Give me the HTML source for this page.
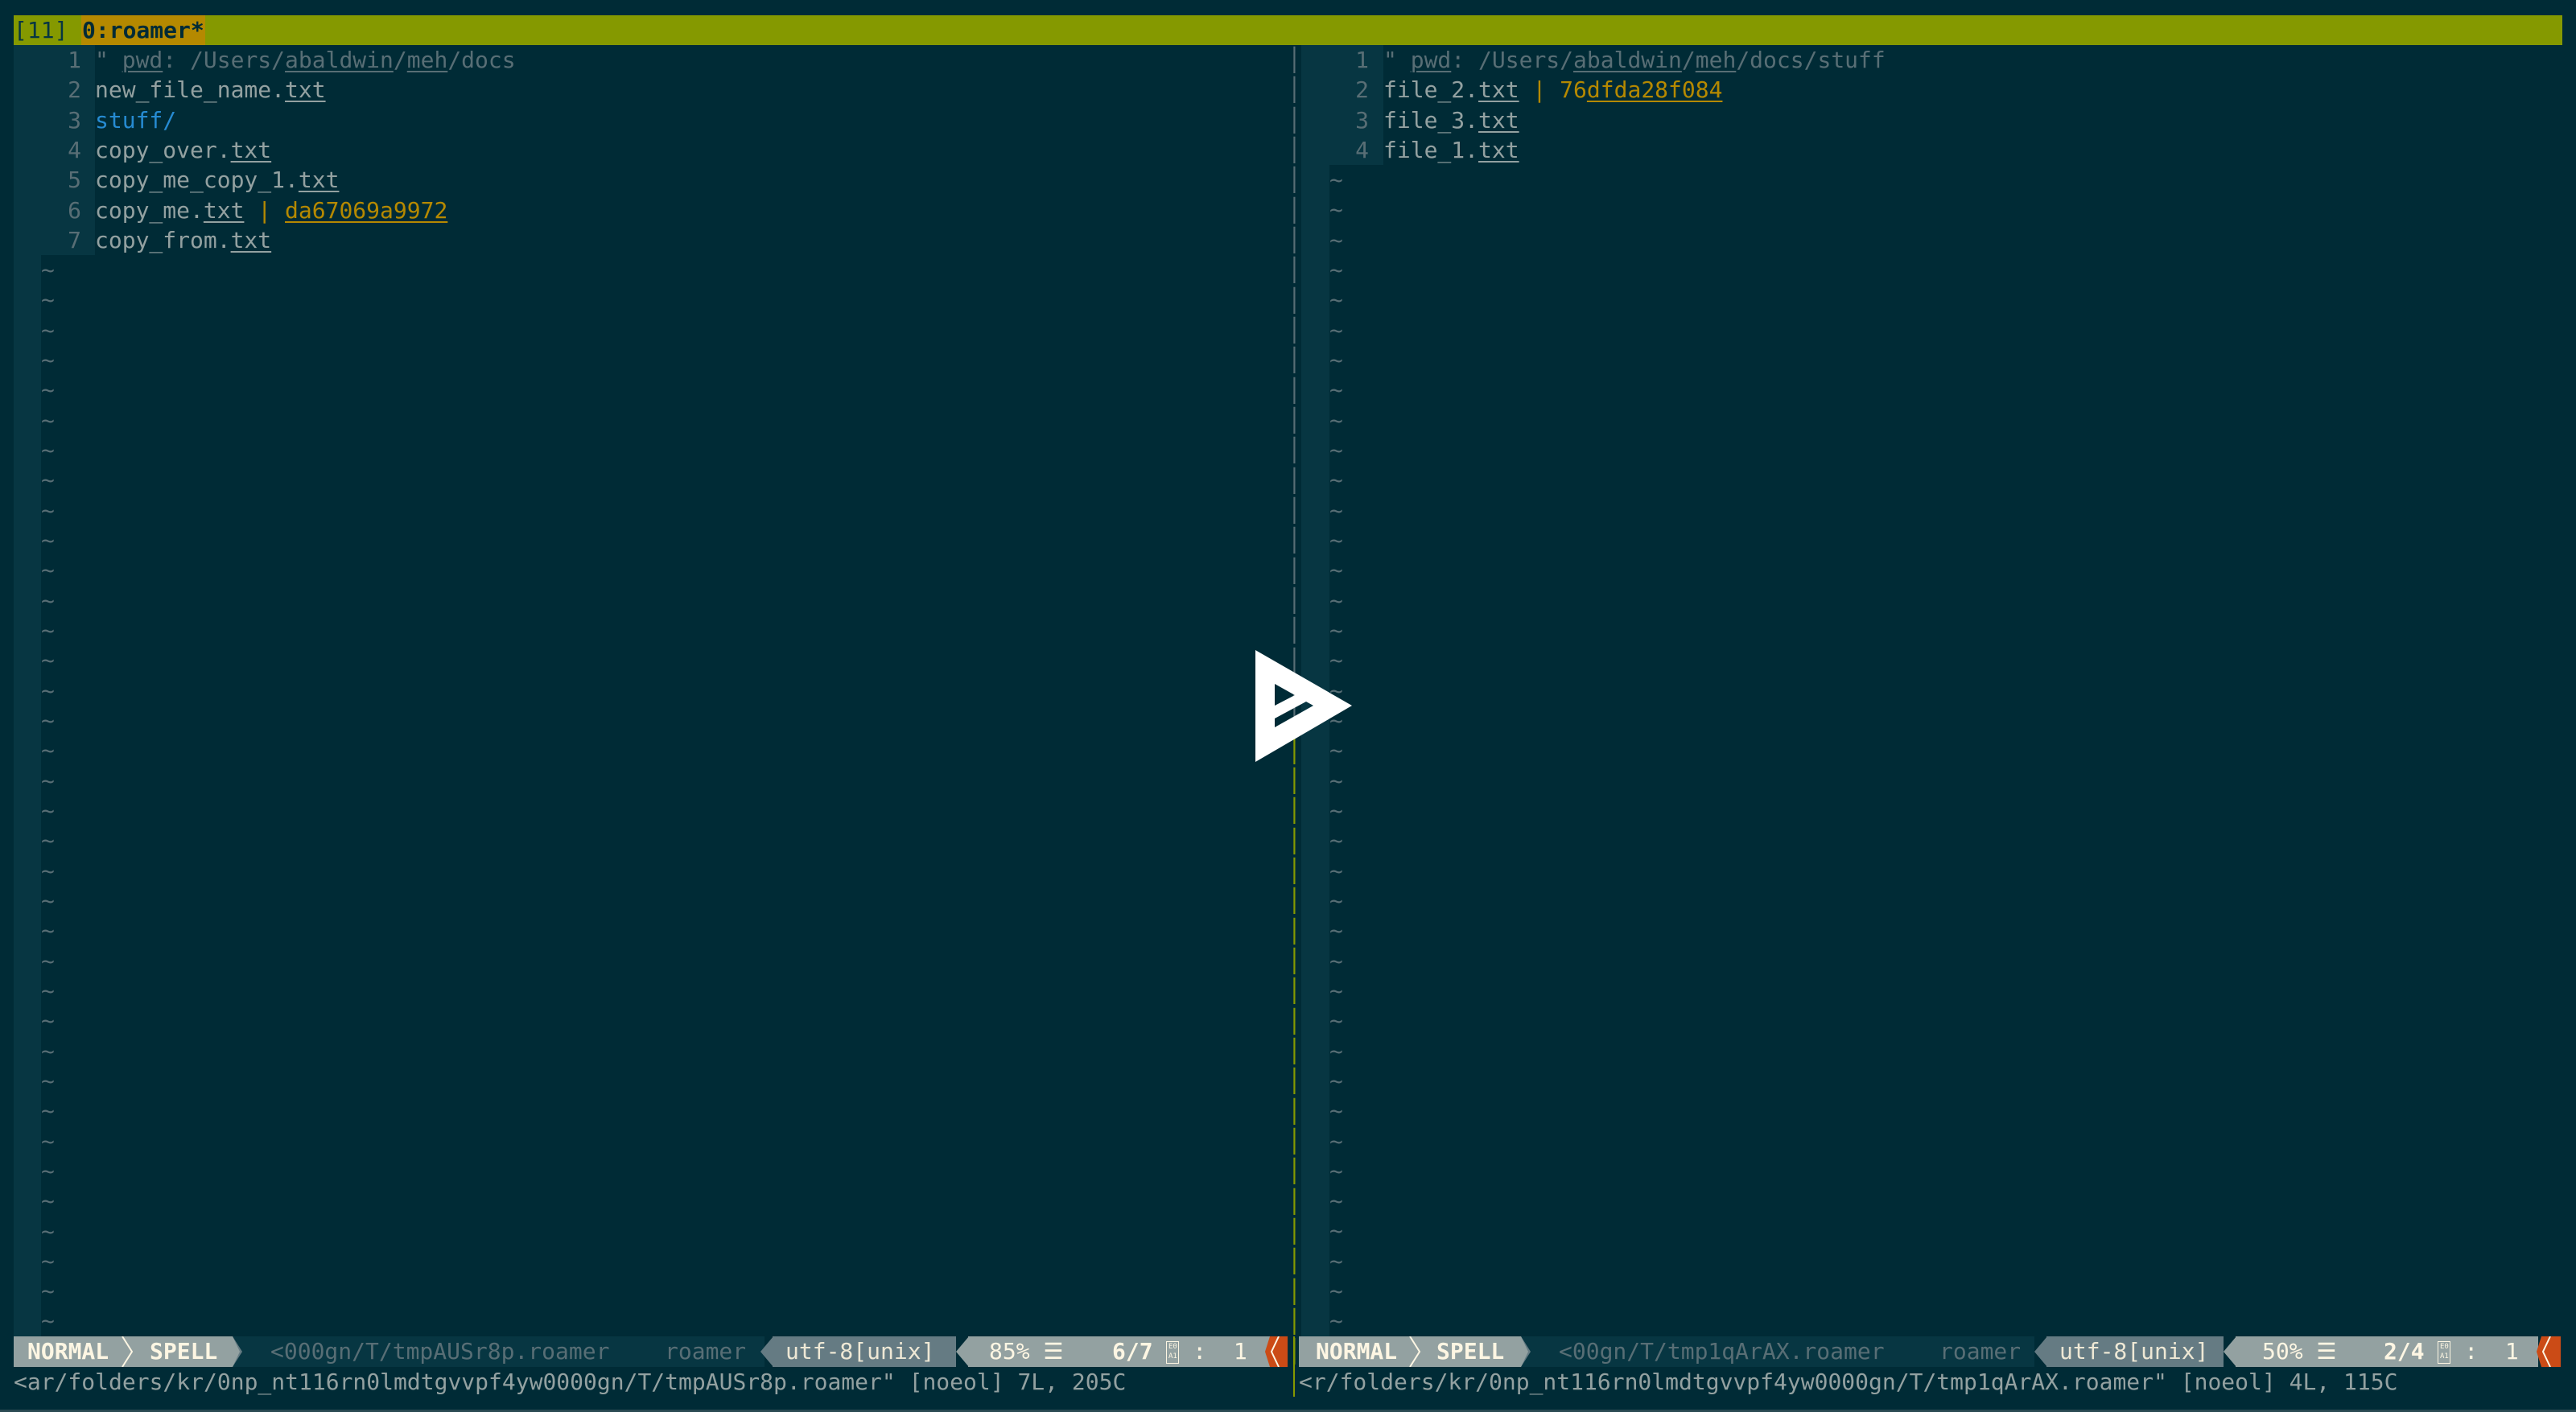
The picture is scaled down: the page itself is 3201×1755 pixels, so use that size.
<!DOCTYPE html>
<html><head><meta charset="utf-8">
<style>
html,body{margin:0;padding:0;background:#002b36;width:3201px;height:1755px;overflow:hidden;position:relative;font-family:"DejaVu Sans Mono","Liberation Mono",monospace;font-size:28px;}
.a{position:absolute;}
pre{margin:0;font:inherit;line-height:37.33px;position:absolute;white-space:pre;}
.u{text-decoration:underline;text-underline-offset:4px;text-decoration-thickness:2px;}
.sb{position:absolute;top:1661px;height:38px;line-height:38px;white-space:pre;}
.b{font-weight:bold;}
.box{display:inline-block;width:14px;height:26px;border:1px solid #fdf6e3;font-size:9px;line-height:12px;vertical-align:middle;text-align:center;}
</style></head><body>
<!-- tab bar -->
<div class="a" style="left:17px;top:19px;width:3167px;height:37px;background:#859900;"></div>
<div class="a" style="left:17px;top:19px;height:37px;line-height:37px;color:#073642;white-space:pre;">[11] </div>
<div class="a b" style="left:101px;top:19px;height:37px;line-height:37px;background:#b58900;color:#002b36;padding:0 1px;">0:roamer*</div>

<!-- left pane -->
<div class="a" style="left:17px;top:56px;width:34px;height:1605px;background:#073642;"></div>
<div class="a" style="left:17px;top:56px;width:101px;height:261px;background:#073642;"></div>
<pre style="left:17px;top:56px;width:84px;text-align:right;color:#586e75;">1
2
3
4
5
6
7</pre>
<pre style="left:118px;top:56px;color:#93a1a1;"><span style="color:#586e75">" <span class="u">pwd</span>: /Users/<span class="u">abaldwin</span>/<span class="u">meh</span>/docs</span>
new_file_name.<span class="u">txt</span>
<span style="color:#268bd2">stuff/</span>
copy_over.<span class="u">txt</span>
copy_me_copy_1.<span class="u">txt</span>
copy_me.<span class="u">txt</span> <span style="color:#b58900">| <span class="u">da67069a9972</span></span>
copy_from.<span class="u">txt</span></pre>
<pre style="left:51px;top:317px;color:#586e75;">~
~
~
~
~
~
~
~
~
~
~
~
~
~
~
~
~
~
~
~
~
~
~
~
~
~
~
~
~
~
~
~
~
~
~
~</pre>

<!-- separator -->
<pre style="left:1600px;top:56px;color:#586e75;">│
│
│
│
│
│
│
│
│
│
│
│
│
│
│
│
│
│
│
│
│
│
│</pre>
<pre style="left:1600px;top:914.6px;color:#859900;">│
│
│
│
│
│
│
│
│
│
│
│
│
│
│
│
│
│
│
│
│</pre>

<!-- right pane -->
<div class="a" style="left:1617px;top:56px;width:35px;height:1605px;background:#073642;"></div>
<div class="a" style="left:1617px;top:56px;width:102px;height:149px;background:#073642;"></div>
<pre style="left:1617px;top:56px;width:84px;text-align:right;color:#586e75;">1
2
3
4</pre>
<pre style="left:1719px;top:56px;color:#93a1a1;"><span style="color:#586e75">" <span class="u">pwd</span>: /Users/<span class="u">abaldwin</span>/<span class="u">meh</span>/docs/stuff</span>
file_2.<span class="u">txt</span> <span style="color:#b58900">| 76<span class="u">dfda28f084</span></span>
file_3.<span class="u">txt</span>
file_1.<span class="u">txt</span></pre>
<pre style="left:1652px;top:205px;color:#586e75;">~
~
~
~
~
~
~
~
~
~
~
~
~
~
~
~
~
~
~
~
~
~
~
~
~
~
~
~
~
~
~
~
~
~
~
~
~
~
~</pre>

<!-- left status -->
<div class="a" style="left:17px;top:1661px;width:272px;height:38px;background:#93a1a1;"></div>
<svg class="a" style="left:150px;top:1661px" width="20" height="38"><polyline points="2,0 14,19 2,38" fill="none" stroke="#fdf6e3" stroke-width="2"/></svg>
<svg class="a" style="left:289px;top:1661px" width="14" height="38"><polygon points="0,0 14,19 0,38" fill="#657b83"/></svg>
<div class="a" style="left:300px;top:1661px;width:650px;height:38px;background:#073642;"></div>
<svg class="a" style="left:289px;top:1661px" width="14" height="38"><polygon points="0,0 0,38 14,38 14,0" fill="#073642"/><polygon points="0,0 12,19 0,38" fill="#657b83"/><polygon points="0,0 9,19 0,38" fill="#93a1a1"/></svg>
<div class="a" style="left:960px;top:1661px;width:228px;height:38px;background:#657b83;"></div>
<svg class="a" style="left:945px;top:1661px" width="16" height="38"><polygon points="16,0 0,19 16,38" fill="#657b83"/></svg>
<div class="a" style="left:1203px;top:1661px;width:375px;height:38px;background:#93a1a1;"></div>
<svg class="a" style="left:1188px;top:1661px" width="16" height="38"><polygon points="16,0 0,19 16,38" fill="#93a1a1"/></svg>
<svg class="a" style="left:1572px;top:1661px" width="28" height="38"><rect x="6" y="0" width="22" height="38" fill="#cb4b16"/><polygon points="6,0 0,19 6,38" fill="#cb4b16"/><polyline points="17,0 8,19 17,38" fill="none" stroke="#fdf6e3" stroke-width="2"/></svg>
<div class="sb b" style="left:34px;color:#fdf6e3;">NORMAL</div>
<div class="sb b" style="left:186px;color:#fdf6e3;">SPELL</div>
<div class="sb" style="left:336px;color:#586e75;">&lt;000gn/T/tmpAUSr8p.roamer</div>
<div class="sb" style="left:826px;color:#586e75;">roamer</div>
<div class="sb" style="left:976px;color:#eee8d5;">utf-8[unix]</div>
<div class="sb" style="left:1229px;color:#fdf6e3;">85% ☰</div>
<div class="sb" style="left:1382px;color:#fdf6e3;"><b>6/7</b> <span class="box">E0<br>A1</span> :  1</div>

<!-- right status -->
<div class="a" style="left:1614px;top:1661px;width:276px;height:38px;background:#93a1a1;"></div>
<svg class="a" style="left:1750px;top:1661px" width="20" height="38"><polyline points="2,0 14,19 2,38" fill="none" stroke="#fdf6e3" stroke-width="2"/></svg>
<div class="a" style="left:1900px;top:1661px;width:628px;height:38px;background:#073642;"></div>
<svg class="a" style="left:1890px;top:1661px" width="14" height="38"><polygon points="0,0 0,38 14,38 14,0" fill="#073642"/><polygon points="0,0 12,19 0,38" fill="#657b83"/><polygon points="0,0 9,19 0,38" fill="#93a1a1"/></svg>
<div class="a" style="left:2543px;top:1661px;width:220px;height:38px;background:#657b83;"></div>
<svg class="a" style="left:2528px;top:1661px" width="16" height="38"><polygon points="16,0 0,19 16,38" fill="#657b83"/></svg>
<div class="a" style="left:2778px;top:1661px;width:376px;height:38px;background:#93a1a1;"></div>
<svg class="a" style="left:2763px;top:1661px" width="16" height="38"><polygon points="16,0 0,19 16,38" fill="#93a1a1"/></svg>
<svg class="a" style="left:3152px;top:1661px" width="30" height="38"><rect x="6" y="0" width="24" height="38" fill="#cb4b16"/><polygon points="6,0 0,19 6,38" fill="#cb4b16"/><polyline points="17,0 8,19 17,38" fill="none" stroke="#fdf6e3" stroke-width="2"/></svg>
<div class="sb b" style="left:1635px;color:#fdf6e3;">NORMAL</div>
<div class="sb b" style="left:1785px;color:#fdf6e3;">SPELL</div>
<div class="sb" style="left:1937px;color:#586e75;">&lt;00gn/T/tmp1qArAX.roamer</div>
<div class="sb" style="left:2410px;color:#586e75;">roamer</div>
<div class="sb" style="left:2559px;color:#eee8d5;">utf-8[unix]</div>
<div class="sb" style="left:2811px;color:#fdf6e3;">50% ☰</div>
<div class="sb" style="left:2962px;color:#fdf6e3;"><b>2/4</b> <span class="box">E0<br>A1</span> :  1</div>

<!-- separator in status/cmd rows -->
<div class="a" style="left:1607px;top:1661px;width:2px;height:75px;background:#859900;"></div>

<!-- command line -->
<div class="a" style="left:17px;top:1699px;height:37px;line-height:37px;color:#93a1a1;white-space:pre;">&lt;ar/folders/kr/0np_nt116rn0lmdtgvvpf4yw0000gn/T/tmpAUSr8p.roamer" [noeol] 7L, 205C</div>
<div class="a" style="left:1614px;top:1699px;height:37px;line-height:37px;color:#93a1a1;white-space:pre;">&lt;r/folders/kr/0np_nt116rn0lmdtgvvpf4yw0000gn/T/tmp1qArAX.roamer" [noeol] 4L, 115C</div>
<div class="a" style="left:0;top:1752px;width:3201px;height:3px;background:#2a4a52;"></div>

<!-- play logo -->
<svg class="a" style="left:0;top:0" width="3201" height="1755"><path fill="#fff" fill-rule="evenodd" d="M1560,808 L1680,877 L1560,947 Z M1584,850 L1609,864 L1584,877 Z M1584,893 L1623,872 L1632,877 L1584,904 Z"/></svg>
</body></html>
